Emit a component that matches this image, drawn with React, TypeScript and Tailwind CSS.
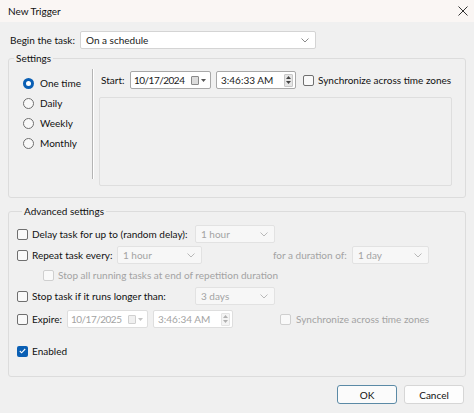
import React from 'react';

const Chevron = ({ dim }: { dim?: boolean }) => (
  <svg width="8" height="5" viewBox="0 0 8 5" className="shrink-0">
    <path d="M0.5 0.5 L4 4 L7.5 0.5" fill="none" stroke={dim ? '#b8b8b8' : '#8a8a8a'} strokeWidth="1" />
  </svg>
);

const Select = ({ value, w, disabled }: { value: string; w: string; disabled?: boolean }) => (
  <div
    className={`${w} h-[18px] shrink-0 flex items-center justify-between pl-[5px] pr-[6px] rounded-[2px] border ${
      disabled ? 'bg-[#f7f7f7] border-[#e2e2e2] text-[#a3a3a3]' : 'bg-white border-[#d4d4d4] text-[#1a1a1a]'
    }`}
  >
    <span>{value}</span>
    <Chevron dim={disabled} />
  </div>
);

const DateBox = ({ value, disabled }: { value: string; disabled?: boolean }) => (
  <div
    className={`w-[81px] h-[18px] shrink-0 flex items-center justify-between pl-[3px] pr-[4px] border rounded-[2px] ${
      disabled ? 'bg-white border-[#dedede] text-[#a3a3a3]' : 'bg-white border-[#a8a8a8] text-[#1a1a1a]'
    }`}
  >
    <span className="tracking-[-0.5px]">{value}</span>
    <span className="flex items-center gap-[2px]">
      <span className={`block w-[8px] h-[9px] border rounded-[1px] ${disabled ? 'border-[#d0d0d0] bg-[#f0f0f0]' : 'border-[#8a8a8a] bg-[#dcdcdc]'}`} />
      <svg width="5" height="3" viewBox="0 0 5 3">
        <path d="M0 0 L5 0 L2.5 3 Z" fill={disabled ? '#c4c4c4' : '#555'} />
      </svg>
    </span>
  </div>
);

const TimeBox = ({ value, disabled }: { value: string; disabled?: boolean }) => (
  <div
    className={`w-[80px] h-[18px] shrink-0 flex items-center justify-between pl-[4px] pr-[2px] border rounded-[2px] bg-white ${
      disabled ? 'border-[#dedede] text-[#a3a3a3]' : 'border-[#a8a8a8] text-[#1a1a1a]'
    }`}
  >
    <span>{value}</span>
    <span className={`w-[9px] h-[13px] flex flex-col items-center justify-center gap-[2px] rounded-[1px] border ${disabled ? 'bg-[#f4f4f4] border-[#e4e4e4]' : 'bg-[#e6e6e6] border-[#c8c8c8]'}`}>
      <svg width="5" height="3" viewBox="0 0 5 3"><path d="M0 3 L5 3 L2.5 0 Z" fill={disabled ? '#b0b0b0' : '#444'} /></svg>
      <svg width="5" height="3" viewBox="0 0 5 3"><path d="M0 0 L5 0 L2.5 3 Z" fill={disabled ? '#b0b0b0' : '#444'} /></svg>
    </span>
  </div>
);

const Check = ({ checked, disabled }: { checked?: boolean; disabled?: boolean }) =>
  checked ? (
    <span className="block w-[11px] h-[11px] rounded-[2px] bg-[#0a5fb4] flex items-center justify-center shrink-0">
      <svg width="7" height="6" viewBox="0 0 7 6"><path d="M0.8 3 L2.6 4.8 L6.2 1" fill="none" stroke="white" strokeWidth="1.1" /></svg>
    </span>
  ) : (
    <span className={`block w-[11px] h-[11px] rounded-[2px] border bg-[#f9f9f9] shrink-0 ${disabled ? 'border-[#cfcfcf]' : 'border-[#6f6f6f]'}`} />
  );

const Radio = ({ label, checked }: { label: string; checked?: boolean }) => (
  <div className="h-[20px] flex items-center">
    {checked ? (
      <span className="w-[11px] h-[11px] rounded-full bg-[#0a5fb4] flex items-center justify-center ml-[14px] mr-[6px] shrink-0">
        <span className="block w-[5px] h-[5px] rounded-full bg-white" />
      </span>
    ) : (
      <span className="block w-[11px] h-[11px] rounded-full border border-[#6f6f6f] bg-[#f9f9f9] ml-[14px] mr-[6px] shrink-0" />
    )}
    <span>{label}</span>
  </div>
);

export default function App() {
  return (
    <div className="w-[474px] h-[413px] bg-[#f0f0f0] flex flex-col text-[10px] text-[#111111] leading-[14px] whitespace-nowrap font-['Segoe_UI','Lato','Noto_Sans',sans-serif] overflow-hidden">
      {/* title bar */}
      <div className="h-[22px] bg-[#faf6f4] flex items-center justify-between pl-[8px] pr-[6px] shrink-0">
        <span>New Trigger</span>
        <svg width="10" height="10" viewBox="0 0 10 10">
          <path d="M0.5 0.5 L9.5 9.5 M9.5 0.5 L0.5 9.5" stroke="#333" strokeWidth="1" />
        </svg>
      </div>

      {/* begin the task */}
      <div className="flex items-center mt-[9px] pl-[10px]">
        <span className="w-[70px] shrink-0">Begin the task:</span>
        <Select value="On a schedule" w="w-[236px]" />
      </div>

      {/* settings */}
      <fieldset className="mx-[8px] mt-[2px] h-[147px] border border-[#dcdcdc] rounded-[3px] flex">
        <legend className="ml-[5px] px-[2px]">Settings</legend>
        <div className="flex w-full">
          <div className="w-[83px] pt-[8px] shrink-0">
            <Radio label="One time" checked />
            <Radio label="Daily" />
            <Radio label="Weekly" />
            <Radio label="Monthly" />
          </div>
          <div className="w-[1px] bg-[#b4b4b4] mt-[4px] mb-[7px] shadow-[1px_0_0_#ffffff] shrink-0" />
          <div className="flex flex-col pl-[6px] pt-[6px]">
            <div className="flex items-center">
              <span className="ml-[2px] w-[29px] shrink-0">Start:</span>
              <DateBox value="10/17/2024" />
              <span className="w-[5px] shrink-0" />
              <TimeBox value="3:46:33 AM" />
              <span className="flex ml-[7px] mr-[4px]"><Check /></span>
              <span>Synchronize across time zones</span>
            </div>
            <div className="mt-[8px] w-[353px] h-[89px] border border-[#dedede] rounded-[2px] bg-[#f0f0f0]" />
          </div>
        </div>
      </fieldset>

      {/* advanced settings */}
      <fieldset className="mx-[8px] mt-[6px] h-[173px] border border-[#dcdcdc] rounded-[3px] flex flex-col pt-[7px] pl-[8px]">
        <legend className="ml-[5px] px-[2px]">Advanced settings</legend>
        <div className="h-[18px] flex items-center">
          <Check />
          <span className="ml-[4px] w-[163px] shrink-0">Delay task for up to (random delay):</span>
          <Select value="1 hour" w="w-[80px]" disabled />
        </div>
        <div className="h-[18px] flex items-center mt-[3px]">
          <Check />
          <span className="ml-[4px] w-[85px] shrink-0">Repeat task every:</span>
          <Select value="1 hour" w="w-[85px]" disabled />
          <span className="ml-[71px] w-[79px] shrink-0 text-[#a3a3a3]">for a duration of:</span>
          <Select value="1 day" w="w-[77px]" disabled />
        </div>
        <div className="h-[18px] flex items-center mt-[2px] pl-[26px]">
          <Check disabled />
          <span className="ml-[4px] text-[#a3a3a3]">Stop all running tasks at end of repetition duration</span>
        </div>
        <div className="h-[18px] flex items-center mt-[3px]">
          <Check />
          <span className="ml-[4px] w-[163px] shrink-0">Stop task if it runs longer than:</span>
          <Select value="3 days" w="w-[80px]" disabled />
        </div>
        <div className="h-[18px] flex items-center mt-[5px]">
          <Check />
          <span className="ml-[4px] w-[35px] shrink-0">Expire:</span>
          <DateBox value="10/17/2025" disabled />
          <span className="w-[5px] shrink-0" />
          <TimeBox value="3:46:34 AM" disabled />
          <span className="flex ml-[47px] mr-[5px]"><Check disabled /></span>
          <span className="text-[#a3a3a3]">Synchronize across time zones</span>
        </div>
        <div className="h-[18px] flex items-center mt-[14px]">
          <Check checked />
          <span className="ml-[4px]">Enabled</span>
        </div>
      </fieldset>

      {/* buttons */}
      <div className="flex justify-end gap-[7px] pr-[10px] mt-[8px]">
        <button className="w-[60px] h-[19px] bg-[#fbfbfb] border border-[#5b8aa6] rounded-[3px] text-[#111111]">OK</button>
        <button className="w-[60px] h-[19px] bg-[#fdfdfd] border border-[#d6d6d6] rounded-[3px] text-[#111111]">Cancel</button>
      </div>
    </div>
  );
}
